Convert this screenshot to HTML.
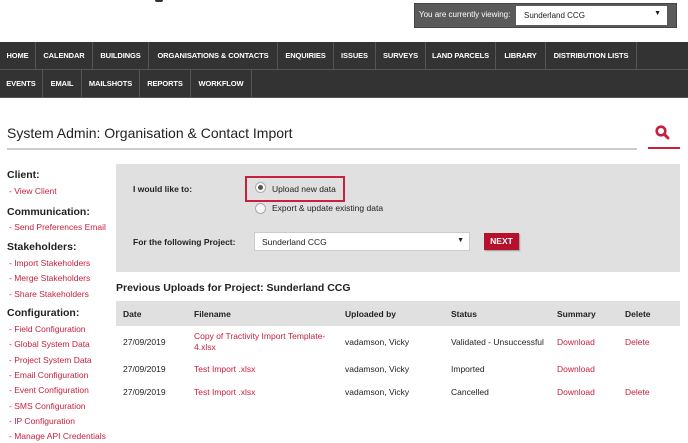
<!DOCTYPE html>
<html><head><style>
*{margin:0;padding:0;box-sizing:border-box}
body{width:688px;height:443px;overflow:hidden;background:#fff;font-family:"Liberation Sans",Arial,sans-serif;color:#222;position:relative;font-size:9px}
.abs{position:absolute}
.nav{position:absolute;left:0;width:688px;height:28px;background:#333;border-bottom:1px solid #555}
.nav span{position:absolute;top:0;height:28px;line-height:28px;color:#fff;font-weight:bold;font-size:7.5px;letter-spacing:-0.1px;text-align:center;border-right:1px solid #555}
.side h4{position:absolute;left:7px;font-size:10.5px;font-weight:bold;color:#222}
.side a{position:absolute;left:9px;font-size:8.5px;color:#c8203f;text-decoration:none}
.red{color:#c8203f}
.t{position:absolute;font-size:8.5px}
.th{position:absolute;font-size:8.5px;font-weight:bold}
</style></head><body>
<div class="abs" style="left:155px;top:0;width:8px;height:2px;background:#333;border-radius:0 0 4px 4px"></div>
<div class="abs" style="left:414px;top:3px;width:263px;height:25px;background:#5a5a5a;border:1px solid #444"></div>
<div class="abs" style="left:419px;top:10px;color:#fff;font-size:8px">You are currently viewing:</div>
<div class="abs" style="left:516px;top:6px;width:151px;height:19px;background:#fff;font-size:8px;padding:5px 0 0 8px">Sunderland CCG<span style="position:absolute;right:6px;top:4px;font-size:7px">▼</span></div>

<div class="nav" style="top:42px">
<span style="left:0;width:36px">HOME</span><span style="left:36px;width:57px">CALENDAR</span><span style="left:93px;width:56px">BUILDINGS</span><span style="left:149px;width:129px">ORGANISATIONS &amp; CONTACTS</span><span style="left:278px;width:56px">ENQUIRIES</span><span style="left:334px;width:42px">ISSUES</span><span style="left:376px;width:50px">SURVEYS</span><span style="left:426px;width:70px">LAND PARCELS</span><span style="left:496px;width:50px">LIBRARY</span><span style="left:546px;width:91px">DISTRIBUTION LISTS</span>
</div>
<div class="nav" style="top:70px">
<span style="left:0;width:43px">EVENTS</span><span style="left:43px;width:39px">EMAIL</span><span style="left:82px;width:58px">MAILSHOTS</span><span style="left:140px;width:51px">REPORTS</span><span style="left:191px;width:61px">WORKFLOW</span>
</div>

<div class="abs" style="left:7px;top:125px;font-size:14px;color:#222">System Admin: Organisation &amp; Contact Import</div>
<div class="abs" style="left:7px;top:148px;width:630px;height:2px;background:#ccc"></div>
<div class="abs" style="left:648px;top:147px;width:32px;height:2px;background:#c8203f"></div>
<svg class="abs" style="left:655px;top:125px" width="15" height="15" viewBox="0 0 15 15"><circle cx="6" cy="6" r="4.3" fill="none" stroke="#c8203f" stroke-width="2.6"/><line x1="9.3" y1="9.3" x2="13" y2="13" stroke="#c8203f" stroke-width="3" stroke-linecap="round"/></svg>

<div class="side">
<h4 style="top:169px">Client:</h4><a style="top:186px">- View Client</a>
<h4 style="top:206px">Communication:</h4><a style="top:222px">- Send Preferences Email</a>
<h4 style="top:241px">Stakeholders:</h4><a style="top:258px">- Import Stakeholders</a><a style="top:273px">- Merge Stakeholders</a><a style="top:289px">- Share Stakeholders</a>
<h4 style="top:307px">Configuration:</h4><a style="top:324px">- Field Configuration</a><a style="top:339px">- Global System Data</a><a style="top:355px">- Project System Data</a><a style="top:370px">- Email Configuration</a><a style="top:385px">- Event Configuration</a><a style="top:401px">- SMS Configuration</a><a style="top:416px">- IP Configuration</a><a style="top:431px">- Manage API Credentials</a>
</div>

<div class="abs" style="left:116px;top:164px;width:564px;height:108px;background:#e0e0e0"></div>
<div class="abs" style="left:133px;top:184px;font-weight:bold;font-size:8.5px">I would like to:</div>
<div class="abs" style="left:245px;top:176px;width:100px;height:26px;border:2.5px solid #c8203f"></div>
<div class="abs" style="left:255px;top:182px;width:11px;height:11px;border-radius:50%;background:#fff;border:1px solid #aaa"></div>
<div class="abs" style="left:258px;top:185px;width:5px;height:5px;border-radius:50%;background:#555"></div>
<div class="abs" style="left:272px;top:184px;font-size:8.5px">Upload new data</div>
<div class="abs" style="left:255px;top:203px;width:11px;height:11px;border-radius:50%;background:#f5f5f5;border:1px solid #aaa"></div>
<div class="abs" style="left:272px;top:203px;font-size:8.5px">Export &amp; update existing data</div>
<div class="abs" style="left:133px;top:237px;font-weight:bold;font-size:8.5px">For the following Project:</div>
<div class="abs" style="left:254px;top:232px;width:216px;height:19px;background:#fff;border:1px solid #ccc;font-size:8.5px;padding:4px 0 0 7px">Sunderland CCG<span style="position:absolute;right:5px;top:4px;font-size:7px">▼</span></div>
<div class="abs" style="left:484px;top:233px;width:35px;height:17px;background:#b5102c;color:#fff;font-weight:bold;font-size:8.5px;text-align:center;line-height:16px;box-shadow:1px 1px 1px #999">NEXT</div>

<div class="abs" style="left:116px;top:282px;font-weight:bold;font-size:10.5px">Previous Uploads for Project: Sunderland CCG</div>
<div class="abs" style="left:116px;top:301px;width:564px;height:25px;background:#e0e0e0"></div>
<div class="th" style="left:123px;top:309px">Date</div><div class="th" style="left:194px;top:309px">Filename</div><div class="th" style="left:345px;top:309px">Uploaded by</div><div class="th" style="left:451px;top:309px">Status</div><div class="th" style="left:557px;top:309px">Summary</div><div class="th" style="left:625px;top:309px">Delete</div>

<div class="t" style="left:123px;top:337px">27/09/2019</div>
<div class="t red" style="left:194px;top:331px;width:140px;line-height:11px">Copy of Tractivity Import Template-4.xlsx</div>
<div class="t" style="left:345px;top:337px">vadamson, Vicky</div><div class="t" style="left:451px;top:337px">Validated - Unsuccessful</div>
<div class="t red" style="left:557px;top:337px">Download</div><div class="t red" style="left:625px;top:337px">Delete</div>

<div class="t" style="left:123px;top:364px">27/09/2019</div><div class="t red" style="left:194px;top:364px">Test Import .xlsx</div>
<div class="t" style="left:345px;top:364px">vadamson, Vicky</div><div class="t" style="left:451px;top:364px">Imported</div>
<div class="t red" style="left:557px;top:364px">Download</div>

<div class="t" style="left:123px;top:387px">27/09/2019</div><div class="t red" style="left:194px;top:387px">Test Import .xlsx</div>
<div class="t" style="left:345px;top:387px">vadamson, Vicky</div><div class="t" style="left:451px;top:387px">Cancelled</div>
<div class="t red" style="left:557px;top:387px">Download</div><div class="t red" style="left:625px;top:387px">Delete</div>
</body></html>
